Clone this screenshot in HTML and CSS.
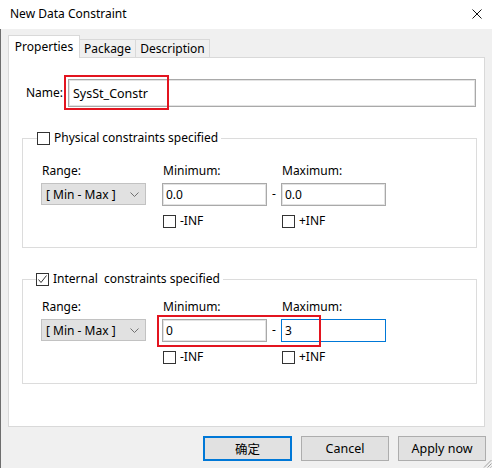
FILE: index.html
```html
<!DOCTYPE html>
<html lang="en">
<head>
<meta charset="utf-8">
<title>New Data Constraint</title>
<link rel="stylesheet" href="styles.css">
</head>
<body>
<div class="window">
  <div class="titlebar">
    <span class="title">New Data Constraint</span>
    <svg class="close" width="10" height="10" viewBox="0 0 10 10"><path d="M0.5 0.5 L9.5 9.5 M9.5 0.5 L0.5 9.5" stroke="#111" stroke-width="1" fill="none"/></svg>
  </div>
  <div class="client">
    <div class="tabs">
      <div class="tab active">Properties</div>
      <div class="tab">Package</div>
      <div class="tab">Description</div>
    </div>
    <div class="panel">
      <div class="name-row">
        <span class="name-label">Name:</span>
        <div class="input name-input">SysSt_Constr</div>
      </div>

      <fieldset class="group g1">
        <legend><span class="cb"></span>Physical constraints specified</legend>
        <div class="grid">
          <span class="lbl">Range:</span>
          <span></span>
          <span class="lbl">Minimum:</span>
          <span></span>
          <span class="lbl">Maximum:</span>

          <div class="select">[ Min - Max ]<svg class="chev" width="9" height="5" viewBox="0 0 9 5"><path d="M0.5 0.5 L4.5 4.5 L8.5 0.5" stroke="#707070" stroke-width="1" fill="none"/></svg></div>
          <span></span>
          <div class="input small">0.0</div>
          <span class="dash">-</span>
          <div class="input small">0.0</div>

          <span></span>
          <span></span>
          <span class="check"><span class="cb"></span>-INF</span>
          <span></span>
          <span class="check"><span class="cb"></span>+INF</span>
        </div>
      </fieldset>

      <fieldset class="group g2">
        <legend><span class="cb checked"><svg width="11" height="11" viewBox="0 0 11 11"><path d="M1.5 5.5 L4 8.5 L9.5 1.5" stroke="#333" stroke-width="1" fill="none"/></svg></span>Internal&nbsp; constraints specified</legend>
        <div class="grid">
          <span class="lbl">Range:</span>
          <span></span>
          <span class="lbl">Minimum:</span>
          <span></span>
          <span class="lbl">Maximum:</span>

          <div class="select">[ Min - Max ]<svg class="chev" width="9" height="5" viewBox="0 0 9 5"><path d="M0.5 0.5 L4.5 4.5 L8.5 0.5" stroke="#707070" stroke-width="1" fill="none"/></svg></div>
          <span></span>
          <div class="input small">0</div>
          <span class="dash">-</span>
          <div class="input small focused">3</div>

          <span></span>
          <span></span>
          <span class="check"><span class="cb"></span>-INF</span>
          <span></span>
          <span class="check"><span class="cb"></span>+INF</span>
        </div>
      </fieldset>
    </div>
    <div class="buttons">
      <div class="btn default">确定</div>
      <div class="btn">Cancel</div>
      <div class="btn">Apply now</div>
    </div>
  </div>
  <div class="annot annot-name"></div>
  <div class="annot annot-range"></div>
  <svg class="grip" width="9" height="9" viewBox="0 0 9 9"><path d="M8.5 1 L1 8.5 M8.5 4.5 L4.5 8.5 M8.5 7.5 L7.5 8.5" stroke="#a0a0a0" stroke-width="1" fill="none"/></svg>
</div>
</body>
</html>
```

FILE: styles.css
```css
* { box-sizing: border-box; }
html, body {
  margin: 0;
  padding: 0;
  background: #f0f0f0;
}
body {
  font-family: "Noto Sans", "Noto Sans CJK SC", sans-serif;
  font-size: 12px;
  color: #000;
}
.window {
  position: relative;
  width: 492px;
  height: 468px;
  overflow: hidden;
  background: #f0f0f0;
}
.titlebar {
  height: 29px;
  background: #fff;
  display: flex;
  align-items: center;
  justify-content: space-between;
  padding: 0 10px 2px 10px;
}
.title {
  font-size: 12px;
  line-height: 16px;
}
.close { display: block; }
.client {
  height: 439px;
  border-left: 1px solid #6e6e6e;
  padding-left: 7px;
  padding-top: 6px;
}
.tabs {
  display: flex;
  align-items: flex-end;
  height: 22px;
}
.tab {
  height: 18px;
  line-height: 17px;
  border: 1px solid #d9d9d9;
  border-bottom: none;
  border-left: none;
  background: #f0f0f0;
  text-align: center;
  font-size: 12px;
}
.tab:nth-child(2) { width: 56px; }
.tab:nth-child(3) { width: 74px; }
.tab.active {
  width: 72px;
  height: 23px;
  margin-bottom: -1px;
  background: #fff;
  border-left: 1px solid #d9d9d9;
  position: relative;
  z-index: 1;
  line-height: 22px;
}
.panel {
  width: 477px;
  height: 370px;
  background: #fff;
  border: 1px solid #d9d9d9;
  padding-top: 21px;
}
.name-row {
  display: flex;
  align-items: center;
  padding-left: 17px;
}
.name-label {
  width: 42px;
  line-height: 16px;
}
.input {
  background: #fff;
  border: 1px solid #a9a9a9;
  box-shadow: inset 0 0 0 1px #e3e3e3;
  padding-left: 3px;
  display: flex;
  align-items: center;
}
.name-input {
  width: 408px;
  height: 28px;
  padding-left: 4px;
  font-size: 12.5px;
}
.group {
  margin: 23px 0 0 13px;
  width: 455px;
  border: 1px solid #dcdcdc;
  padding: 17px 0 20px 18px;
  min-width: 0;
}
.g2 { padding-top: 12px; }
.group legend {
  margin-left: -4px;
  padding: 0 3px 0 0;
  line-height: 16px;
  height: 16px;
  display: flex;
  align-items: center;
  background: #fff;
}
.g2 legend { margin-left: -5px; }
.cb {
  display: inline-flex;
  align-items: center;
  justify-content: center;
  width: 13px;
  height: 13px;
  border: 1px solid #333;
  background: #fff;
  margin-right: 4px;
  flex: none;
}
.cb svg { display: block; }
.grid {
  display: grid;
  grid-template-columns: 105px 16px 105px 14px 105px;
  grid-template-rows: 16px 23px 17px;
  row-gap: 4px;
}
.grid > :nth-child(n+11) { margin-top: 5px; }
.lbl {
  line-height: 16px;
  padding-left: 1px;
}
.select {
  height: 22px;
  background: #e1e1e1;
  border: 1px solid #c2c2c2;
  display: flex;
  align-items: center;
  justify-content: space-between;
  padding: 0 6px 0 4px;
}
.chev { display: block; }
.small { height: 23px; }
.focused {
  border-color: #0078d7;
  box-shadow: none;
}
.dash {
  display: flex;
  align-items: center;
  justify-content: center;
  padding-bottom: 2px;
}
.check {
  display: flex;
  align-items: center;
  line-height: 16px;
  padding-left: 1px;
}
.buttons {
  display: flex;
  justify-content: flex-end;
  gap: 9px;
  margin-top: 9px;
  padding-right: 6px;
}
.btn {
  width: 88px;
  height: 25px;
  background: #e1e1e1;
  border: 1px solid #adadad;
  display: flex;
  align-items: center;
  justify-content: center;
  font-size: 12.5px;
}
.btn.default {
  width: 89px;
  border: 2px solid #0078d7;
}
.annot {
  position: absolute;
  border: 2px solid #e3141f;
  pointer-events: none;
}
.annot-name {
  left: 64px;
  top: 75px;
  width: 105px;
  height: 35px;
}
.annot-range {
  left: 157px;
  top: 315px;
  width: 164px;
  height: 32px;
}
.grip {
  position: absolute;
  right: 0;
  bottom: 0;
}
```
